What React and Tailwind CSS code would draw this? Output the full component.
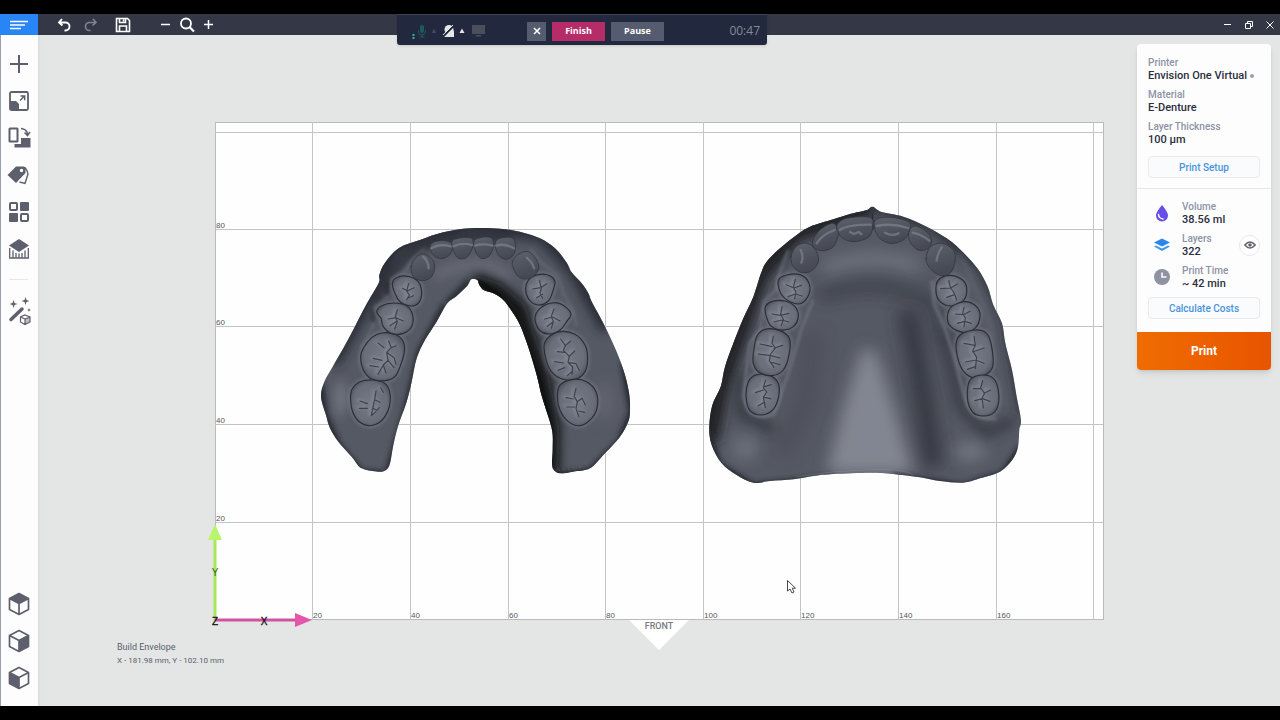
import { useState } from 'react';

// Closed Catmull-Rom curve through a list of points
function smooth(pts) {
  const n = pts.length;
  let d = `M${pts[0][0]} ${pts[0][1]}`;
  for (let i = 0; i < n; i++) {
    const [a, b, c, e] = [pts[(i + n - 1) % n], pts[i], pts[(i + 1) % n], pts[(i + 2) % n]];
    d += `C${b[0] + (c[0] - a[0]) / 6} ${b[1] + (c[1] - a[1]) / 6} ${c[0] - (e[0] - b[0]) / 6} ${c[1] - (e[1] - b[1]) / 6} ${c[0]} ${c[1]}`;
  }
  return d + 'Z';
}

// Models are drawn at three units per plate pixel
const LOWER = {
  id: 'lower',
  origin: 'translate(310 215) scale(0.33333)',
  outline: [
    [33, 545], [43, 500], [68, 455], [100, 400], [133, 338], [167, 272], [206, 205], [208, 180], [225, 143], [268, 98],
    [330, 75], [400, 52], [480, 40], [570, 41], [640, 53], [690, 70], [735, 100], [770, 143], [785, 172], [815, 205],
    [835, 235], [846, 262], [880, 325], [920, 410], [945, 480], [958, 540], [960, 590], [954, 622], [930, 665],
    [880, 720], [840, 760], [790, 770], [750, 775], [731, 764], [726, 745], [728, 700], [725, 640], [696, 545],
    [680, 480], [656, 400], [630, 330], [605, 288], [580, 255], [550, 235], [522, 226], [508, 210], [502, 195],
    [484, 193], [472, 212], [440, 243], [412, 265], [380, 320], [345, 375], [320, 430], [305, 500], [290, 560],
    [265, 630], [250, 690], [240, 745], [228, 765], [205, 770], [155, 760], [125, 725], [85, 680], [60, 640], [48, 600],
  ],
  molars: [
    [[122, 560], [125, 525], [150, 500], [190, 495], [225, 505], [240, 535], [238, 575], [225, 605], [205, 625], [175, 632], [145, 618], [128, 590]],
    [[152, 425], [160, 400], [185, 368], [215, 354], [255, 358], [280, 380], [283, 410], [272, 450], [255, 485], [225, 497], [185, 492], [160, 465]],
    [[200, 290], [215, 272], [250, 264], [290, 272], [308, 300], [305, 335], [280, 355], [245, 356], [220, 335], [213, 310]],
    [[247, 205], [262, 187], [295, 184], [325, 200], [335, 235], [325, 265], [300, 273], [272, 262], [257, 240]],
    [[647, 220], [660, 190], [690, 178], [720, 182], [735, 200], [728, 230], [715, 258], [685, 270], [658, 255]],
    [[675, 310], [690, 280], [725, 264], [755, 268], [783, 295], [770, 320], [750, 345], [720, 357], [688, 345]],
    [[702, 400], [712, 370], [750, 350], [795, 358], [825, 390], [833, 430], [825, 470], [795, 494], [750, 490], [718, 460]],
    [[742, 545], [750, 510], [790, 493], [830, 500], [858, 530], [862, 575], [845, 610], [810, 632], [775, 620], [750, 585]],
  ],
  fronts: [
    [[303, 155], [318, 128], [340, 117], [368, 135], [374, 160], [362, 188], [335, 197], [310, 185]],
    [[360, 95], [375, 80], [410, 78], [427, 90], [420, 118], [395, 131], [372, 122]],
    [[425, 82], [445, 70], [480, 68], [490, 80], [483, 110], [465, 130], [440, 125]],
    [[491, 80], [510, 68], [542, 68], [551, 88], [540, 120], [517, 131], [499, 115]],
    [[555, 85], [570, 70], [605, 68], [617, 90], [610, 120], [588, 133], [565, 120]],
    [[607, 140], [625, 118], [655, 110], [680, 135], [685, 165], [660, 190], [630, 188], [612, 165]],
  ],
  fissures:
    'M198 528l-4 26 16 8M194 554l-6 26-4 22 14-12M188 580l12 6 8-8M150 558l22 8M148 580l24 0M212 518l8 14M236 378l8 20-14 14 4 24-14 14 8 24M244 398l14-6M230 412l22 16 6 20M234 436l18 22M220 450l-16 28M190 430l26 6M204 384l18 14M180 452l26 4M262 284l-6 22 6 14-8 22M234 312l24-4 22 10M240 332l18-12M296 206l-6 22 8 12-8 14M278 220l14 8 20-10M292 250l18-8M688 196l6 24-4 14 8 16M668 222l24-4 18-12M680 248l18-10M732 282l-8 22 6 16-6 20M704 312l24-6 22 12M712 334l18-14M752 372l14 20-6 14 18 18-4 18 14 14-2 22M766 392l16-14M778 424l16-16M774 442l24 4 10 20M742 410l22 2M734 440l26 4M744 466l20-8M786 470l-14 12M798 520l-6 24 10 16-4 20 8 24M802 560l14-10 10 20M768 548l22 4M770 576l24 0M806 588l18 4',
  ridges: 'M364 100Q390 84 422 94M430 94Q455 82 486 90M495 92Q520 84 548 92M558 92Q585 84 612 100M650 128Q668 142 672 160M340 125Q355 140 356 160',
};

const UPPER = {
  id: 'upper',
  origin: 'translate(700 200) scale(0.33333)',
  outline: [
    [500, 30], [450, 42], [400, 58], [330, 80], [290, 105], [240, 145], [200, 185], [183, 220], [160, 290], [130, 355],
    [100, 430], [75, 500], [62, 560], [37, 615], [28, 680], [35, 735], [65, 790], [110, 825], [160, 848], [210, 843],
    [280, 838], [340, 828], [400, 822], [510, 818], [580, 822], [660, 832], [720, 843], [790, 848], [840, 835],
    [900, 815], [938, 778], [954, 740], [958, 690], [963, 660], [950, 590], [936, 510], [916, 430], [906, 370],
    [880, 315], [863, 260], [832, 205], [782, 150], [740, 115], [680, 80], [610, 50], [545, 36], [518, 20],
  ],
  molars: [
    [[138, 590], [145, 545], [170, 524], [210, 527], [235, 550], [236, 590], [220, 628], [185, 645], [150, 632]],
    [[160, 460], [170, 410], [195, 388], [240, 392], [268, 415], [268, 460], [250, 510], [215, 527], [175, 515], [160, 490]],
    [[195, 325], [215, 305], [255, 303], [285, 320], [295, 350], [280, 380], [245, 390], [210, 375]],
    [[235, 240], [260, 225], [300, 224], [325, 245], [328, 280], [305, 310], [270, 305], [242, 280]],
    [[708, 275], [715, 240], [750, 226], [785, 238], [800, 262], [792, 300], [755, 318], [720, 305]],
    [[742, 350], [755, 320], [795, 305], [830, 320], [840, 350], [825, 385], [790, 397], [752, 380]],
    [[768, 440], [780, 405], [825, 390], [860, 400], [875, 440], [878, 500], [855, 525], [815, 532], [782, 500]],
    [[802, 580], [810, 540], [845, 525], [880, 535], [895, 570], [893, 620], [870, 645], [830, 645], [808, 620]],
  ],
  fronts: [
    [[273, 170], [290, 138], [322, 130], [348, 152], [355, 185], [335, 212], [305, 218], [280, 200]],
    [[337, 125], [360, 90], [400, 70], [415, 100], [400, 140], [370, 152], [345, 145]],
    [[410, 78], [440, 55], [510, 52], [518, 80], [505, 112], [460, 125], [425, 112]],
    [[524, 62], [570, 52], [625, 65], [630, 90], [610, 120], [570, 130], [535, 110]],
    [[627, 95], [645, 78], [680, 95], [695, 120], [685, 145], [655, 150], [630, 125]],
    [[678, 175], [692, 140], [725, 130], [760, 150], [765, 185], [750, 220], [720, 226], [690, 205]],
  ],
  fissures:
    'M196 542l-6 22 10 12-10 16 6 30M190 570l-24 8M194 560l20-6M192 592l20 4M194 606l-20 12M220 408l-4 22 10 14-14 18-4 20 14 20M180 432l36 8M222 444l26-8M210 466l30 8M174 462l34 4M210 486l30 8M246 320l-4 24 8 14-6 18M216 342l26 4 24-6M222 366l24-6 20 6M286 238l-6 24 8 14-4 20M258 254l24 10 22-8M264 290l22-8 20 6M746 242l6 22 10 14 8 22M722 266l30-2 20-12M740 292l24-8M792 322l-4 18 8 14-4 26M766 342l24 2 20-10M772 370l22-6 20 6M822 408l4 28-8 16 12 20-4 34M792 430l32 6M818 456l34-12M796 486l32-6 24 10M802 508l24-8M848 542l-6 22 12 16-8 14 4 30M820 566l24 0M852 580l20-10M824 602l24-6 22 8',
  ridges: 'M350 130Q366 104 404 90M420 90Q440 74 512 74M530 78Q575 68 624 84M638 98Q662 102 688 122M302 150Q312 168 304 188M725 142Q712 160 710 182M450 96l12 6 14-6 8 6M555 98Q575 110 596 100',
};

function Teeth({ model }) {
  const molars = model.molars.map(smooth);
  const fronts = model.fronts.map(smooth);
  return (
    <g strokeLinecap="round" strokeLinejoin="round">
      <g fill="none" stroke="#838792" strokeWidth="16" opacity="0.4" filter="url(#soft4)">
        {molars.map((d) => <path key={d} d={d} />)}
      </g>
      {molars.map((d) => <path key={d} d={d} fill="url(#molar)" stroke="#2b2e36" strokeWidth="3.5" />)}
      {fronts.map((d) => <path key={d} d={d} fill="url(#front)" stroke="#343740" strokeWidth="2.5" />)}
      <path d={model.fissures} fill="none" stroke="#8d919d" strokeWidth="9" opacity="0.55" transform="translate(-6 -3)" filter="url(#soft4)" />
      <path d={model.fissures} fill="none" stroke="#353841" strokeWidth="3.5" opacity="0.85" filter="url(#soft1)" />
      <path d={model.ridges} fill="none" stroke="#8a8e9a" strokeWidth="7" opacity="0.55" filter="url(#soft2)" />
    </g>
  );
}

function LowerDenture() {
  return (
    <g transform={LOWER.origin}>
      <clipPath id="clip-lower"><path d={smooth(LOWER.outline)} /></clipPath>
      <g clipPath="url(#clip-lower)" fill="none">
        <rect width="980" height="800" fill="#555963" />
        <path d="M60 440L206 180L250 90L480 25L700 50L800 160L900 340" stroke="#24262d" strokeWidth="60" opacity="0.85" filter="url(#soft16)" />
        <path d="M195 260Q250 120 380 70L600 60" stroke="#2f323a" strokeWidth="36" opacity="0.7" filter="url(#soft8)" />
        <path d="M375 185Q440 140 540 150L600 190" stroke="#6a6e7a" strokeWidth="24" filter="url(#soft16)" />
        <path d="M490 200L560 225L625 280L695 490L725 640L722 780" stroke="#08090c" strokeWidth="46" filter="url(#soft16)" />
        <path d="M500 200L560 242L612 300L684 500L718 650" stroke="#08090c" strokeWidth="14" filter="url(#soft4)" />
        <path d="M405 270L330 410L290 580L235 770" stroke="#2b2e36" strokeWidth="22" filter="url(#soft8)" />
        <path d="M478 200L412 265" stroke="#2b2e36" strokeWidth="22" filter="url(#soft8)" />
        <ellipse cx="92" cy="550" rx="16" ry="55" fill="#7f8390" opacity="0.8" filter="url(#soft16)" />
        <path d="M30 500L45 600L85 690L155 772L235 778" stroke="#24262d" strokeWidth="18" filter="url(#soft8)" />
        <ellipse cx="885" cy="560" rx="20" ry="60" fill="#6e727e" opacity="0.7" filter="url(#soft24)" />
        <path d="M940 440L966 590L930 680L840 770L730 782" stroke="#24262d" strokeWidth="20" filter="url(#soft8)" />
        <path d="M345 100Q300 130 290 165L245 190L238 240L196 275L188 335L150 400" stroke="#757986" strokeWidth="6" opacity="0.5" filter="url(#soft4)" />
        <path d="M236 200L232 240M192 285L188 320" stroke="#1c1e24" strokeWidth="14" opacity="0.5" filter="url(#soft4)" />
        <path d="M660 100L690 140L745 180L762 240L790 285L800 335" stroke="#757986" strokeWidth="7" opacity="0.45" filter="url(#soft4)" />
        <path d="M745 758l4 10m10-12l4 12m12-12l3 12m13-14l2 12m16-16l2 12m16-18l4 8" stroke="#82868f" strokeWidth="2" opacity="0.35" />
      </g>
      <Teeth model={LOWER} />
    </g>
  );
}

function UpperDenture() {
  return (
    <g transform={UPPER.origin}>
      <clipPath id="clip-upper"><path d={smooth(UPPER.outline)} /></clipPath>
      <g clipPath="url(#clip-upper)" fill="none">
        <rect width="980" height="860" fill="#555963" />
        <path d="M18 720L50 560L170 220L280 90L510 10" stroke="#202228" strokeWidth="75" filter="url(#soft16)" />
        <path d="M510 10L700 75L850 200L925 360L975 640" stroke="#24262d" strokeWidth="30" filter="url(#soft16)" />
        <path d="M370 210Q500 150 660 200" stroke="#757985" strokeWidth="44" opacity="0.8" filter="url(#soft24)" />
        <path d="M360 290Q510 225 690 300L730 420" stroke="#33363e" strokeWidth="34" opacity="0.7" filter="url(#soft24)" />
        <path d="M620 330Q660 500 700 800" stroke="#2f323a" strokeWidth="60" opacity="0.8" filter="url(#soft24)" />
        <path d="M730 400L780 620L860 700L940 660" stroke="#33363e" strokeWidth="34" opacity="0.7" filter="url(#soft16)" />
        <path d="M340 400L320 600L240 760" stroke="#484b55" strokeWidth="60" opacity="0.6" filter="url(#soft24)" />
        <path d="M490 440Q440 560 380 820H640Q590 640 530 460Z" fill="#8b8f9a" opacity="0.85" filter="url(#soft24)" />
        <path d="M120 520L120 640L220 690" stroke="#2b2e36" strokeWidth="24" opacity="0.8" filter="url(#soft16)" />
        <ellipse cx="135" cy="745" rx="40" ry="34" fill="#757985" opacity="0.8" filter="url(#soft24)" />
        <ellipse cx="810" cy="755" rx="50" ry="26" fill="#7c808b" opacity="0.85" filter="url(#soft24)" />
        <path d="M20 680L55 795L160 858L400 834M580 830L790 860L910 822L965 740" stroke="#24262d" strokeWidth="20" filter="url(#soft8)" />
        <path d="M290 830Q400 812 510 809T640 826" stroke="#9a9ea8" strokeWidth="2" opacity="0.4" />
        <path d="M265 150L240 215L228 270L190 305L180 390L148 430L130 590Q150 665 222 645L275 490L305 385L340 300" stroke="#7e828e" strokeWidth="8" opacity="0.55" filter="url(#soft4)" />
        <path d="M695 240L702 310L735 385L762 470L797 600Q820 665 890 655" stroke="#7e828e" strokeWidth="9" opacity="0.6" filter="url(#soft4)" />
        <path d="M780 160L815 240L850 310L880 420" stroke="#6a6e7a" strokeWidth="10" opacity="0.5" filter="url(#soft8)" />
        <path d="M517 40L519 90" stroke="#2a2c34" strokeWidth="4" />
      </g>
      <Teeth model={UPPER} />
    </g>
  );
}

const LABELS_X = [[312, 20], [410, 40], [508, 60], [605, 80], [703, 100], [800, 120], [898, 140], [996, 160], [1093, null]];
const LABELS_Y = [[132, null], [229, 80], [326, 60], [424, 40], [522, 20]];

function BuildPlate() {
  return (
    <svg viewBox="215 122 888 498" className="block w-full overflow-visible font-['Liberation_Sans',sans-serif]" role="img" aria-label="Build plate">
      <defs>
        {[1, 2, 4, 8, 16, 24].map((s) => (
          <filter key={s} id={`soft${s}`} filterUnits="userSpaceOnUse" x="-100" y="-100" width="1200" height="1100">
            <feGaussianBlur stdDeviation={s} />
          </filter>
        ))}
        <radialGradient id="molar" cx="0.5" cy="0.5" r="0.6">
          <stop offset="0" stopColor="#757985" />
          <stop offset="0.7" stopColor="#696d79" />
          <stop offset="1" stopColor="#4a4d57" />
        </radialGradient>
        <linearGradient id="front" x1="0" y1="0" x2="0.3" y2="1">
          <stop offset="0" stopColor="#5e626d" />
          <stop offset="0.5" stopColor="#51555f" />
          <stop offset="1" stopColor="#464953" />
        </linearGradient>
      </defs>
      <rect x="215.5" y="122.5" width="888" height="497" fill="#fefefe" stroke="#b9babd" />
      <g stroke="#c3c4c8">
        {LABELS_X.map(([x]) => <path key={x} d={`M${x + 0.5} 122V620`} />)}
        {LABELS_Y.map(([y]) => <path key={y} d={`M215 ${y + 0.5}H1103`} />)}
      </g>
      <g fontSize="8" fill="#55575c">
        {LABELS_X.map(([x, t]) => t && <text key={t} x={x + 1} y="618">{t}</text>)}
        {LABELS_Y.map(([y, t]) => t && <text key={t} x="216" y={y - 1}>{t}</text>)}
      </g>
      <LowerDenture />
      <UpperDenture />
      <path d="M215 620V538" stroke="#a5e85a" strokeWidth="3" />
      <path d="M215 524L222 540H208Z" fill="#b9f56c" />
      <path d="M215 620H296" stroke="#d152a0" strokeWidth="3" />
      <path d="M312 620L295 613V627Z" fill="#e357ab" />
      <g fontSize="10" fill="#111" stroke="#111" strokeWidth="0.3" textAnchor="middle">
        <text x="215" y="576" fill="#3d5c14" stroke="none">Y</text>
        <text x="215" y="625">Z</text>
        <text x="264" y="625">X</text>
      </g>
      <path d="M787.5 580.5v10.500l2.500-2 2 4 2-1-1.800-3.800h3.300Z" fill="#fff" stroke="#333" strokeWidth="0.9" />
    </svg>
  );
}

function ToolIcon({ name }) {
  const paths = {
    add: <path d="M12 3v18M3 12h18" stroke="currentColor" strokeWidth="2" />,
    scale: (
      <>
        <rect x="3" y="3" width="18" height="18" rx="1.5" fill="none" stroke="currentColor" strokeWidth="1.8" />
        <path d="M3 12h6l3 3v6H3Z" fill="currentColor" />
        <path d="M13 11.5l4.500-4.500M13.500 7h4.200v4.200" fill="none" stroke="currentColor" strokeWidth="1.500" />
      </>
    ),
    rotate: (
      <>
        <rect x="2.5" y="2.5" width="8" height="13" rx="0.5" fill="none" stroke="currentColor" strokeWidth="2" />
        <path d="M14 12h9.500v9.500H7.500V18H14Z" fill="currentColor" />
        <path d="M14 2.500q6 .5 6.500 6M17.500 6.500l3 3 2.500-3.500" fill="none" stroke="currentColor" strokeWidth="1.5" />
      </>
    ),
    tag: (
      <>
        <path d="M18 4.500q2.500 3 3 6.500l-3 9.500-5.500-1.500" fill="none" stroke="currentColor" strokeWidth="1.4" />
        <path fillRule="evenodd" d="M.5 12L9 3.500h7.500q2 0 2 2V10L9 20ZM14.500 5.800a1.700 1.700 0 1 0 0 3.400 1.700 1.700 0 0 0 0-3.400Z" fill="currentColor" />
      </>
    ),
    grid: (
      <>
        <rect x="3" y="3" width="7" height="7" rx="1" fill="none" stroke="currentColor" strokeWidth="2" />
        <rect x="13" y="2" width="9" height="9" rx="1" fill="currentColor" />
        <rect x="2" y="13" width="9" height="9" rx="1" fill="currentColor" />
        <rect x="14" y="14" width="7" height="7" rx="1" fill="none" stroke="currentColor" strokeWidth="2" />
      </>
    ),
    supports: (
      <>
        <path d="M12 2l10 6.500L12 15 2 8.500Z" fill="currentColor" />
        <path d="M2.700 11v10h18.600V11M6 13.500V21M9 16v5M12 16.500V21M15 16v5M18 13.500V21" fill="none" stroke="currentColor" strokeWidth="1.3" />
      </>
    ),
  };
  return <svg viewBox="0 0 24 24" className="size-6">{paths[name]}</svg>;
}

function WandIcon() {
  return (
    <svg viewBox="0 0 24 30" className="h-[30px] w-6">
      <path d="M4 23.500L15 13" stroke="currentColor" strokeWidth="3.5" strokeLinecap="round" />
      <path d="M6.500 4l1 3 3 1-3 1-1 3-1-3-3-1 3-1ZM18.500 1l1 3 3 1-3 1-1 3-1-3-3-1 3-1ZM22 12l.6 1.400 1.400.6-1.400.6-.6 1.400-.6-1.400L20 14l1.400-.6Z" fill="currentColor" />
      <path d="M18 19l5 2v5l-5 2.500-4.500-2.500v-5ZM13.500 21l4.500 2 5-2M18 23v5.500" fill="none" stroke="currentColor" strokeWidth="1.2" />
      <path d="M18 23l5-2v5l-5 2.500Z" fill="currentColor" opacity="0.4" />
    </svg>
  );
}

function CubeIcon({ face }) {
  const faces = { top: 'M12 1.500l9.500 5L12 11.500l-9.500-5Z', right: 'M21.500 6.500v11L12 22.500v-11Z', left: 'M2.500 6.500v11l9.500 5v-11Z' };
  return (
    <svg viewBox="0 0 24 24" className="size-6">
      <path d="M12 1.500l9.500 5v11L12 22.500l-9.500-5v-11ZM2.500 6.500l9.500 5 9.500-5M12 11.500v11" fill="none" stroke="currentColor" strokeWidth="1.7" strokeLinejoin="round" />
      <path d={faces[face]} fill="currentColor" />
    </svg>
  );
}

const TOOLS = [
  ['add', 'Add'],
  ['scale', 'Scale'],
  ['rotate', 'Rotate'],
  ['tag', 'Label'],
  ['grid', 'Arrange'],
  ['supports', 'Supports'],
];

function Sidebar() {
  const tool = 'flex h-[37px] w-full items-center justify-center shrink-0';
  return (
    <nav className="z-10 flex w-[38px] shrink-0 flex-col border-l border-gray-400 bg-[#fdfdfd] py-[10px] pr-[2px] text-[#5d606c] shadow">
      {TOOLS.map(([name, label]) => (
        <button key={name} aria-label={label} className={tool}><ToolIcon name={name} /></button>
      ))}
      <hr className="mx-2 my-3 border-gray-200" />
      <button aria-label="Auto prepare" className={tool}><WandIcon /></button>
      <div className="mt-auto">
        <button aria-label="Top view" className={tool}><CubeIcon face="top" /></button>
        <button aria-label="Right view" className={tool}><CubeIcon face="right" /></button>
        <button aria-label="Left view" className={tool}><CubeIcon face="left" /></button>
      </div>
    </nav>
  );
}

function TitleBar() {
  return (
    <header className="flex h-[21px] items-center bg-[#343846] text-white">
      <button aria-label="Menu" className="flex h-full w-[38px] items-center justify-center bg-[#2885f5]">
        <svg viewBox="0 0 18 10" className="h-[10px] w-[18px]"><path d="M0 1.500h18M0 5h15M0 8.500h11" stroke="#fff" strokeWidth="1.5" /></svg>
      </button>
      <div className="ml-[19px] flex items-center gap-[13px]">
        <button aria-label="Undo">
          <svg viewBox="0 0 14 14" className="size-[14px]"><path d="M5 1L2 4.500l3.500 3M2 4.500h6.500a4 4 0 0 1 0 8H7.500" fill="none" stroke="currentColor" strokeWidth="1.9" /></svg>
        </button>
        <button aria-label="Redo" className="text-[#81848f]">
          <svg viewBox="0 0 14 14" className="size-[14px]"><path d="M9 1l3 3.500-3.500 3M12 4.500H5.500a4 4 0 0 0 0 8H6.500" fill="none" stroke="currentColor" strokeWidth="1.6" /></svg>
        </button>
      </div>
      <button aria-label="Save" className="ml-[17px]">
        <svg viewBox="0 0 16 16" className="size-4"><path d="M1.500 1.500h11l2 2v11h-13ZM4.500 1.500v4h6v-4M4.500 14.500V9h7v5.500M8.500 2.500v2" fill="none" stroke="currentColor" strokeWidth="1.6" /></svg>
      </button>
      <div className="ml-[30px] flex items-center gap-[9px]">
        <button aria-label="Zoom out">
          <svg viewBox="0 0 9 9" className="size-[9px]"><path d="M0 4.500h9" stroke="currentColor" strokeWidth="1.5" /></svg>
        </button>
        <button aria-label="Zoom to fit">
          <svg viewBox="0 0 16 16" className="size-4"><circle cx="7" cy="6.500" r="5" fill="none" stroke="currentColor" strokeWidth="1.8" /><path d="M10.500 10l4.500 4.500" stroke="currentColor" strokeWidth="2.2" /></svg>
        </button>
        <button aria-label="Zoom in">
          <svg viewBox="0 0 9 9" className="size-[9px]"><path d="M0 4.500h9M4.500 0v9" stroke="currentColor" strokeWidth="1.5" /></svg>
        </button>
      </div>
      <div className="mr-[6px] ml-auto flex items-center gap-[13px]">
        <button aria-label="Minimize"><svg viewBox="0 0 8 8" className="size-2"><path d="M0 3.500h7" stroke="currentColor" /></svg></button>
        <button aria-label="Restore"><svg viewBox="0 0 8 8" className="size-2"><path d="M.5 2.500h5v5h-5ZM2.500 2V.5h5v5H6" fill="none" stroke="currentColor" /></svg></button>
        <button aria-label="Close"><svg viewBox="0 0 8 8" className="size-2"><path d="M.5.5l7 7M7.500.5l-7 7" stroke="currentColor" /></svg></button>
      </div>
    </header>
  );
}

// Screen recorder bar floating over the title bar
function RecorderBar() {
  const [paused, setPaused] = useState(false);
  return (
    <div className="absolute top-[14px] left-[397px] z-20 flex h-[31px] w-[370px] items-center rounded-b-[3px] border-t border-[#3f4452] bg-[#22283d] pt-[2px] pr-[7px] pl-[14px] font-['Open_Sans',sans-serif] shadow">
      <svg viewBox="0 0 76 18" className="h-[18px] w-[76px]">
        <path d="M2.500 12v6" stroke="#2fb59a" strokeWidth="2" strokeDasharray="2 1" />
        <rect x="9" y="3" width="4" height="8" rx="2" fill="#1c5a5c" />
        <path d="M7.500 8v1.500a3.500 3.500 0 0 0 7 0V8M11 13v2M8.500 15h5" fill="none" stroke="#1c5a5c" />
        <path d="M21 11l2-4.500 2 4.500Z" fill="#464b5c" />
        <circle cx="38" cy="7.500" r="4.500" fill="#e6e7ea" />
        <path d="M33 15l3-4h4l3-3v7Z" fill="#e6e7ea" />
        <path d="M32.500 14L43 3.500" stroke="#22283d" strokeWidth="2.2" />
        <path d="M32 13L42 3" stroke="#e6e7ea" />
        <path d="M48.500 11l2.500-4.500 2.500 4.500Z" fill="#e6e7ea" />
        <path d="M61 3h13v9H61ZM65 13h5v1.500h-5Z" fill="#4b4f5c" />
      </svg>
      <div className="ml-10 flex gap-[6px] text-[9px] font-bold text-white">
        <button aria-label="Cancel" className="flex h-[19px] w-[19px] items-center justify-center bg-[#565c6f]">
          <svg viewBox="0 0 8 8" className="size-2"><path d="M1 1l6 6M7 1L1 7" stroke="currentColor" strokeWidth="1.6" /></svg>
        </button>
        <button className="h-[19px] w-[53px] bg-[#b52c68]">Finish</button>
        <button onClick={() => setPaused(!paused)} className="h-[19px] w-[53px] bg-[#565c6f]">{paused ? 'Resume' : 'Pause'}</button>
      </div>
      <time className="ml-auto text-xs text-[#858a99]">00:47</time>
    </div>
  );
}

function Field({ label, children }) {
  return (
    <div className="leading-[13px]">
      <dt className="text-[10px] font-medium text-[#8d93a5]">{label}</dt>
      <dd className="flex items-center text-[11px] font-medium text-[#2b2f3d]">{children}</dd>
    </div>
  );
}

function PrintPanel() {
  const link = 'h-[22px] w-full rounded-sm border border-[#e8eaee] bg-[#fafbfc] text-[10px] font-medium text-[#4893dc]';
  return (
    <aside className="mt-[9px] mr-[9px] w-[134px] shrink-0 self-start overflow-hidden rounded-sm bg-[#fdfdfd] shadow-md">
      <section className="border-b border-gray-200 px-[11px] pt-[12px] pb-[10px]">
        <dl className="flex flex-col gap-[6px]">
          <Field label="Printer">
            <span className="whitespace-nowrap">Envision One Virtual</span>
            <span className="ml-[3px] size-1 shrink-0 rounded-full bg-gray-400" />
          </Field>
          <Field label="Material">E-Denture</Field>
          <Field label="Layer Thickness">100 μm</Field>
        </dl>
        <button className={link + ' mt-[10px]'}>Print Setup</button>
      </section>
      <section className="px-[11px] pt-[11px] pb-[13px]">
        <dl className="flex flex-col gap-[6px]">
          <div className="flex items-center">
            <svg viewBox="0 0 16 18" className="mr-[12px] ml-[6px] h-[18px] w-4"><path d="M8 1q6 7 6 10.500a6 6 0 0 1-12 0Q2 8 8 1Z" fill="#6a4de6" /><path d="M4.500 10.500q.5 4 4.500 4.500" fill="none" stroke="#fff" strokeWidth="1.5" strokeLinecap="round" /></svg>
            <Field label="Volume">38.56 ml</Field>
          </div>
          <div className="flex items-center">
            <svg viewBox="0 0 16 16" className="mr-[12px] ml-[6px] size-4"><path d="M8 1.500l8 4-8 4-8-4Z" fill="#2a86e8" /><path d="M0 9.500l2-1 6 3 6-3 2 1-8 4.500Z" fill="#3e97f0" /></svg>
            <Field label="Layers">322</Field>
            <button aria-label="Preview layers" className="-my-1 ml-auto flex size-[21px] items-center justify-center rounded-full border border-[#e5e7eb] bg-white text-[#61646d]">
              <svg viewBox="0 0 12 8" className="h-2 w-3"><path d="M.8 4q5.200-6 10.400 0-5.200 6-10.400 0Z" fill="none" stroke="currentColor" strokeWidth="1.5" /><circle cx="6" cy="4" r="1.8" fill="currentColor" /></svg>
            </button>
          </div>
          <div className="flex items-center">
            <svg viewBox="0 0 16 16" className="mr-[12px] ml-[6px] size-4"><circle cx="8" cy="8" r="8" fill="#8e93a3" /><path d="M8 3.500V8h4.500" fill="none" stroke="#fff" strokeWidth="1.6" /></svg>
            <Field label="Print Time">~ 42 min</Field>
          </div>
        </dl>
        <button className={link + ' mt-[7px]'}>Calculate Costs</button>
      </section>
      <button className="h-[38px] w-full bg-linear-to-r from-[#ef6c00] to-[#e85400] text-xs font-bold text-white">Print</button>
    </aside>
  );
}

export default function App() {
  return (
    <div className="relative flex min-h-screen flex-col bg-black py-[14px] font-[Roboto,sans-serif]">
      <TitleBar />
      <RecorderBar />
      <div className="flex flex-1">
        <Sidebar />
        <main className="flex flex-1 bg-[#e4e6e6]">
          <section className="flex-1 pt-[87px] pr-[34px] pl-[79px]">
            <div className="ml-[98px]">
              <BuildPlate />
              <div className="mx-auto h-[30px] w-[60px] bg-white pt-px text-center text-[9px] leading-[11px] font-medium text-[#77797e] [clip-path:polygon(0_0,100%_0,50%_100%)]">
                FRONT
              </div>
            </div>
            <div className="-mt-[9px] leading-[13px] text-[#5a5d69]">
              <p className="text-[9px]">Build Envelope</p>
              <p className="text-[8px]">X - 181.98 mm, Y - 102.10 mm</p>
            </div>
          </section>
          <PrintPanel />
        </main>
      </div>
    </div>
  );
}
